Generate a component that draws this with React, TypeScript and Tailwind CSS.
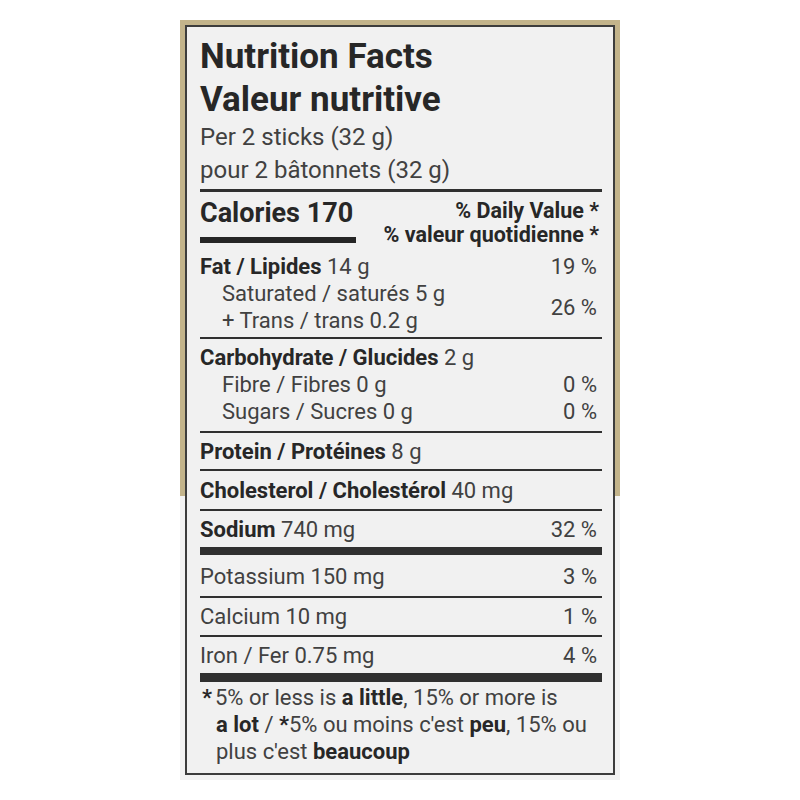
import React from "react";

const Rule = ({ h = "h-[2px]" }: { h?: string }) => (
  <div className={`w-full bg-[#303030] ${h}`} />
);

const Pct = ({ children }: { children: React.ReactNode }) => (
  <span className="pr-[5px] text-[#414141]">{children}</span>
);

const App = () => {
  return (
    <div className="min-h-screen bg-white pt-[20px] font-['Roboto','Liberation_Sans',sans-serif]">
      <div className="mx-auto w-[440px] p-[5px] bg-[linear-gradient(to_bottom,#c3b48b_0,#c3b48b_476px,#f3f3f3_476px)]">
        <div className="border-2 border-[#3d3d3d] bg-[#f1f1f1] pl-[13px] pr-[11px] text-[22px] text-[#414141]">
          {/* title */}
          <div className="pt-[8px]">
            <h1 className="text-[35px] leading-[43px] font-bold text-[#272727]">
              Nutrition Facts
            </h1>
            <h2 className="text-[35px] leading-[43px] font-bold text-[#272727]">
              Valeur nutritive
            </h2>
            <p className="text-[24px] leading-[33px]">Per 2 sticks (32 g)</p>
            <p className="text-[24px] leading-[33px]">pour 2 bâtonnets (32 g)</p>
          </div>
          <div className="mt-[2px]">
            <Rule h="h-[3px]" />
          </div>

          {/* calories */}
          <div className="flex h-[60px] justify-between">
            <div className="pt-[6px]">
              <div className="text-[27px] leading-[30px] font-bold text-[#272727]">
                Calories 170
              </div>
              <div className="mt-[9px] h-[6px] w-[156px] bg-[#262626]" />
            </div>
            <div className="pt-[7px] pr-[3px] text-right text-[21.5px] leading-[24px] font-bold text-[#272727]">
              <div>% Daily Value *</div>
              <div>% valeur quotidienne *</div>
            </div>
          </div>

          {/* fat */}
          <div className="pt-[1px] pb-[3px] leading-[27px]">
            <div className="flex justify-between">
              <span>
                <b className="text-[#272727]">Fat / Lipides</b> 14 g
              </span>
              <Pct>19 %</Pct>
            </div>
            <div className="flex items-center justify-between">
              <div className="pl-[22px]">
                <div>Saturated / saturés 5 g</div>
                <div>+ Trans / trans 0.2 g</div>
              </div>
              <Pct>26 %</Pct>
            </div>
          </div>
          <Rule />

          {/* carbohydrate */}
          <div className="pt-[5px] pb-[6px] leading-[27px]">
            <div>
              <b className="text-[#272727]">Carbohydrate / Glucides</b> 2 g
            </div>
            <div className="flex justify-between">
              <span className="pl-[22px]">Fibre / Fibres 0 g</span>
              <Pct>0 %</Pct>
            </div>
            <div className="flex justify-between">
              <span className="pl-[22px]">Sugars / Sucres 0 g</span>
              <Pct>0 %</Pct>
            </div>
          </div>
          <Rule />

          <div className="flex h-[36px] items-center">
            <span>
              <b className="text-[#272727]">Protein / Protéines</b> 8 g
            </span>
          </div>
          <Rule />

          <div className="flex h-[38px] items-center">
            <span>
              <b className="text-[#272727]">Cholesterol / Cholestérol</b> 40 mg
            </span>
          </div>
          <Rule />

          <div className="flex h-[36px] items-center justify-between">
            <span>
              <b className="text-[#272727]">Sodium</b> 740 mg
            </span>
            <Pct>32 %</Pct>
          </div>
          <Rule h="h-[8px]" />

          {/* minerals */}
          <div className="flex h-[41px] items-center justify-between pt-[2px]">
            <span>Potassium 150 mg</span>
            <Pct>3 %</Pct>
          </div>
          <Rule />
          <div className="flex h-[37px] items-center justify-between">
            <span>Calcium 10 mg</span>
            <Pct>1 %</Pct>
          </div>
          <Rule />
          <div className="flex h-[36px] items-center justify-between">
            <span>Iron / Fer 0.75 mg</span>
            <Pct>4 %</Pct>
          </div>
          <Rule h="h-[9px]" />

          {/* footnote */}
          <div className="pt-[2px] pb-[8px] leading-[27px]">
            <div className="flex">
              <span className="w-[15px] pl-[2px] font-bold text-[#272727]">*</span>
              <span>
                5% or less is <b className="text-[#272727]">a little</b>, 15% or more is
              </span>
            </div>
            <div className="pl-[16px]">
              <b className="text-[#272727]">a lot</b> /{" "}
              <span className="font-bold text-[#272727]">*</span>5% ou moins c'est{" "}
              <b className="text-[#272727]">peu</b>, 15% ou
            </div>
            <div className="pl-[16px]">
              plus c'est <b className="text-[#272727]">beaucoup</b>
            </div>
          </div>
        </div>
      </div>
    </div>
  );
};

export default App;
